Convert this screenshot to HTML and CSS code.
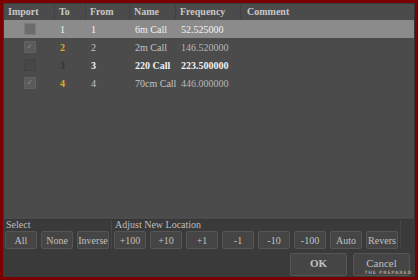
FILE: index.html
```html
<!DOCTYPE html>
<html lang="en">
<head>
  <meta charset="UTF-8">
  <title>Import Memories</title>
  <link rel="stylesheet" href="styles.css">
</head>
<body>
  <div class="dialog">
    <div class="grid">
      <div class="row head">
        <div class="cell">Import</div>
        <div class="cell">To</div>
        <div class="cell">From</div>
        <div class="cell">Name</div>
        <div class="cell">Frequency</div>
        <div class="cell">Comment</div>
      </div>
      <div class="row selected">
        <div class="cell check"><span class="box box-sel"></span></div>
        <div class="cell">1</div>
        <div class="cell">1</div>
        <div class="cell">6m Call</div>
        <div class="cell">52.525000</div>
        <div class="cell"></div>
      </div>
      <div class="row">
        <div class="cell check"><span class="box box-on">&#10003;</span></div>
        <div class="cell orange">2</div>
        <div class="cell">2</div>
        <div class="cell">2m Call</div>
        <div class="cell freq">146.520000</div>
        <div class="cell"></div>
      </div>
      <div class="row strong">
        <div class="cell check"><span class="box box-off"></span></div>
        <div class="cell dim">3</div>
        <div class="cell">3</div>
        <div class="cell">220 Call</div>
        <div class="cell">223.500000</div>
        <div class="cell"></div>
      </div>
      <div class="row">
        <div class="cell check"><span class="box box-on">&#10003;</span></div>
        <div class="cell orange">4</div>
        <div class="cell">4</div>
        <div class="cell">70cm Call</div>
        <div class="cell freq">446.000000</div>
        <div class="cell"></div>
      </div>
    </div>

    <div class="bottom">
      <div class="groups">
        <div class="group">
          <div class="label">Select</div>
          <div class="buttons">
            <button class="btn">All</button>
            <button class="btn">None</button>
            <button class="btn">Inverse</button>
          </div>
        </div>
        <div class="group">
          <div class="label">Adjust New Location</div>
          <div class="buttons">
            <button class="btn">+100</button>
            <button class="btn">+10</button>
            <button class="btn">+1</button>
            <button class="btn">-1</button>
            <button class="btn">-10</button>
            <button class="btn">-100</button>
            <button class="btn">Auto</button>
            <button class="btn">Revers</button>
          </div>
        </div>
      </div>
      <div class="actions">
        <button class="btn big">OK</button>
        <button class="btn big">Cancel</button>
      </div>
      <span class="mark">THE PREPARED</span>
    </div>
  </div>
</body>
</html>
```

FILE: styles.css
```css
body {
  margin: 0;
  background: #7a0000;
  font-family: "Liberation Serif", serif;
}
.dialog {
  width: 412px;
  height: 274px;
  border: 3px solid #7a0000;
  background: #3a3a3a;
  display: flex;
  flex-direction: column;
  position: relative;
}
.grid {
  height: 215px;
  background: #4b4b4b;
  border: 1px solid #363636;
  border-top-color: #3a3a3a;
}
.row {
  display: grid;
  grid-template-columns: 51px 31px 44px 46px 65px 1fr;
  height: 18px;
  align-items: center;
  font-size: 10px;
  color: #c4c4c4;
}
.row .cell {
  padding-left: 5px;
  white-space: nowrap;
  overflow: hidden;
}
.head {
  height: 16px;
  font-weight: bold;
  color: #c8c8c8;
}
.head .cell {
  height: 16px;
  line-height: 16px;
  border-right: 1px solid #424242;
  padding-left: 4px;
}
.head .cell:last-child {
  border-right: none;
  padding-left: 6px;
}
.selected {
  background: #8b8b8b;
  color: #f2f2f2;
}
.strong {
  font-weight: bold;
  color: #f0f0f0;
}
.freq {
  color: #b8b8b8;
}
.orange {
  color: #e2a824;
  font-weight: bold;
}
.dim {
  color: #333333;
}
.check {
  display: flex;
  justify-content: center;
  padding-left: 0 !important;
}
.box {
  width: 10px;
  height: 10px;
  border: 1px solid #5c5c5c;
  border-radius: 1px;
  font-size: 8px;
  line-height: 10px;
  text-align: center;
  font-family: "DejaVu Sans", sans-serif;
}
.box-sel {
  background: #6c6c6c;
  border-color: #7c7c7c;
}
.box-on {
  background: #5a5a5a;
  border-color: #626262;
  color: #8e8e8e;
}
.box-off {
  background: #474747;
  border-color: #424242;
}
.bottom {
  flex: 1;
  padding: 0 2px 0 2px;
}
.groups {
  display: flex;
}
.group {
  padding: 0 2px 0 0;
  margin-right: 2px;
  border-right: 1px solid #474747;
}
.label {
  height: 10px;
  line-height: 10px;
  font-size: 10px;
  color: #bdbdbd;
  padding-left: 1px;
}
.buttons {
  display: flex;
  gap: 4px;
  padding-top: 1px;
}
.btn {
  width: 32px;
  height: 18px;
  padding: 0;
  background: #454545;
  border: 1px solid #555555;
  border-radius: 2px;
  color: #c0c0c0;
  font-family: "Liberation Serif", serif;
  font-size: 10px;
  white-space: nowrap;
  overflow: hidden;
}
.actions {
  display: flex;
  justify-content: flex-end;
  gap: 6px;
  margin-top: 4px;
  padding-right: 3px;
}
.big {
  width: 57px;
  height: 23px;
  padding-bottom: 4px;
  font-size: 11px;
  font-weight: bold;
}
.actions .big:last-child {
  font-weight: normal;
}
.mark {
  position: absolute;
  right: 3px;
  bottom: 2px;
  font-family: "DejaVu Sans", sans-serif;
  font-size: 4.5px;
  font-weight: bold;
  letter-spacing: 0.8px;
  color: #9a9a9a;
}
```
